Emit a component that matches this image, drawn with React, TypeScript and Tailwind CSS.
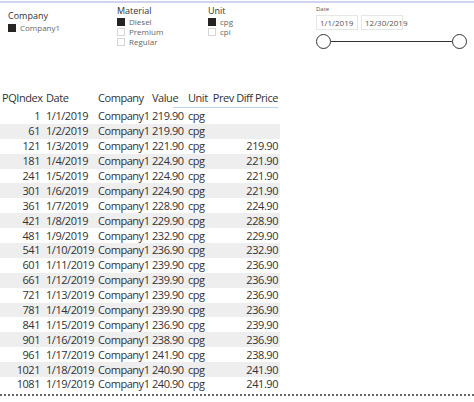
import React from 'react';

type Row = { idx: number; date: string; value: string; prev: string };

const rows: Row[] = [
  { idx: 1, date: '1/1/2019', value: '219.90', prev: '' },
  { idx: 61, date: '1/2/2019', value: '219.90', prev: '' },
  { idx: 121, date: '1/3/2019', value: '221.90', prev: '219.90' },
  { idx: 181, date: '1/4/2019', value: '224.90', prev: '221.90' },
  { idx: 241, date: '1/5/2019', value: '224.90', prev: '221.90' },
  { idx: 301, date: '1/6/2019', value: '224.90', prev: '221.90' },
  { idx: 361, date: '1/7/2019', value: '228.90', prev: '224.90' },
  { idx: 421, date: '1/8/2019', value: '229.90', prev: '228.90' },
  { idx: 481, date: '1/9/2019', value: '232.90', prev: '229.90' },
  { idx: 541, date: '1/10/2019', value: '236.90', prev: '232.90' },
  { idx: 601, date: '1/11/2019', value: '239.90', prev: '236.90' },
  { idx: 661, date: '1/12/2019', value: '239.90', prev: '236.90' },
  { idx: 721, date: '1/13/2019', value: '239.90', prev: '236.90' },
  { idx: 781, date: '1/14/2019', value: '239.90', prev: '236.90' },
  { idx: 841, date: '1/15/2019', value: '236.90', prev: '239.90' },
  { idx: 901, date: '1/16/2019', value: '238.90', prev: '236.90' },
  { idx: 961, date: '1/17/2019', value: '241.90', prev: '238.90' },
  { idx: 1021, date: '1/18/2019', value: '240.90', prev: '241.90' },
  { idx: 1081, date: '1/19/2019', value: '240.90', prev: '241.90' },
];

const Check: React.FC<{ label: string; on?: boolean }> = ({ label, on }) => (
  <div className="flex items-center h-[10px] gap-[4px]">
    <div className={`w-[8px] h-[8px] shrink-0 ${on ? 'bg-[#252423]' : 'border border-[#d6d6d6] bg-white'}`} />
    <span className="text-[8px] leading-[10px] text-[#666] whitespace-nowrap">{label}</span>
  </div>
);

const cols = 'grid grid-cols-[43px_52px_54px_36px_23px_72px]';

export default function App() {
  return (
    <div className="w-[474px] h-[402px] bg-white overflow-hidden text-[#333]" style={{ fontFamily: '"Open Sans", "Noto Sans", sans-serif' }}>
      <div className="h-[2px] mt-[1px] bg-[#cfd3ec]" />

      {/* Slicers */}
      <div className="flex h-[84px]">
        <div className="w-[117px] pl-[8px] pt-[7px]">
          <p className="text-[9px] leading-[12px] text-[#333]">Company</p>
          <div className="mt-[1px]">
            <Check label="Company1" on />
          </div>
        </div>
        <div className="w-[91px] pt-[2px]">
          <p className="text-[9px] leading-[12px] text-[#333]">Material</p>
          <div className="flex flex-col">
            <Check label="Diesel" on />
            <Check label="Premium" />
            <Check label="Regular" />
          </div>
        </div>
        <div className="w-[108px] pt-[2px]">
          <p className="text-[9px] leading-[12px] text-[#333]">Unit</p>
          <div className="flex flex-col">
            <Check label="cpg" on />
            <Check label="cpi" />
          </div>
        </div>
        <div className="w-[158px] pt-[2px]">
          <p className="text-[6px] leading-[9px] text-[#555]">Date</p>
          <div className="flex gap-[3px] mt-[1px]">
            <div className="w-[42px] h-[15px] border border-[#e6e6e6] text-[8px] leading-[13px] pl-[3px] text-[#555] whitespace-nowrap">1/1/2019</div>
            <div className="w-[42px] h-[15px] border border-[#e6e6e6] text-[8px] leading-[13px] pl-[3px] text-[#555] whitespace-nowrap">12/30/2019</div>
          </div>
          <div className="flex items-center mt-[4px] w-[151px]">
            <div className="w-[15px] h-[15px] rounded-full border-[1.5px] border-[#333] bg-white shrink-0" />
            <div className="flex-1 h-[1.5px] bg-[#333]" />
            <div className="w-[15px] h-[15px] rounded-full border-[1.5px] border-[#333] bg-white shrink-0" />
          </div>
        </div>
      </div>

      {/* Table */}
      <div className="w-[280px] text-[11px] tracking-[-0.45px]">
        <div className={`${cols} relative h-[22px] items-center pt-[1px]`}>
          <div className="pl-[2px] whitespace-nowrap">PQIndex</div>
          <div className="pl-[3px]">Date</div>
          <div className="pl-[3px]">Company</div>
          <div className="pl-[3px]">Value</div>
          <div className="pl-[3px]">Unit</div>
          <div className="text-right pr-[2px] whitespace-nowrap">Prev Diff Price</div>
          <div className="absolute left-[173px] w-[105px] bottom-[1px] h-[1.5px] bg-[#b8d3ec]" />
        </div>
        {rows.map((r, i) => (
          <div key={r.idx} className={`${cols} h-[14.9px] items-center leading-[14px] whitespace-nowrap ${i % 2 === 1 ? 'bg-[#eeeeee]' : ''}`}>
            <div className="text-right pr-[3px]">{r.idx}</div>
            <div className="pl-[3px]">{r.date}</div>
            <div className="pl-[3px]">Company1</div>
            <div className="pl-[3px]">{r.value}</div>
            <div className="pl-[3px]">cpg</div>
            <div className="text-right pr-[2px]">{r.prev}</div>
          </div>
        ))}
      </div>
      <div className="mt-[2px] border-t-2 border-dotted border-[#666]" />
    </div>
  );
}
